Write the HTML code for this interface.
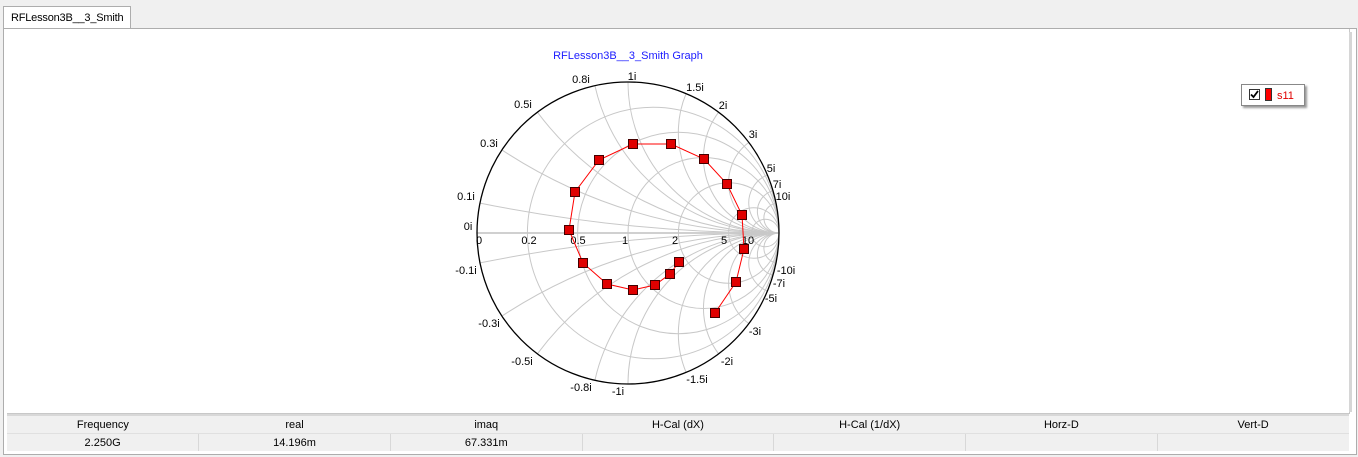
<!DOCTYPE html>
<html><head><meta charset="utf-8"><style>
html,body{margin:0;padding:0;width:1358px;height:457px;overflow:hidden;background:#f0f0f0;font-family:"Liberation Sans",sans-serif;}
.tab{position:absolute;left:3px;top:6px;width:128px;height:22px;background:#fff;border:1px solid #adadad;border-bottom:none;font-size:11px;line-height:22px;padding-left:7px;box-sizing:border-box;white-space:nowrap;letter-spacing:-0.2px;}
.panel{position:absolute;left:3px;top:28px;width:1354px;height:427px;border:1px solid #adadad;background:#fff;box-sizing:border-box;}
.chart{position:absolute;left:7px;top:29px;width:1342px;height:384px;background:#fff;border-right:1px solid #c8c8c8;border-bottom:1px solid #c8c8c8;}
.sb{position:absolute;left:1349px;top:32px;width:3px;height:380px;background:#d6d6d6;}
table{position:absolute;left:7px;top:414px;width:1342px;border-collapse:collapse;font-size:11px;table-layout:fixed;}
td{text-align:center;height:17px;padding:0;background:#f0f0f0;}
tr.h td{border-top:2px solid #d8d8d8;border-bottom:1px solid #e0e0e0;}
tr.d td{border-right:1px solid #d8d8d8;}
.leg{position:absolute;left:1241px;top:84px;width:62px;height:20px;background:#fff;border:1px solid #888;box-shadow:2px 2px 2px #999;}
</style></head><body>
<div class="panel"></div>
<div class="tab">RFLesson3B__3_Smith</div>
<div class="chart"></div>
<div class="sb"></div>
<svg width="1358" height="457" style="position:absolute;left:0;top:0" font-family="Liberation Sans, sans-serif" font-size="11">
<text x="628" y="59" fill="#1c1cff" text-anchor="middle">RFLesson3B__3_Smith Graph</text>
<g transform="translate(1,-1)" fill="none" stroke="#c8c8c8" stroke-width="1">
<line x1="476" y1="234" x2="778" y2="234" stroke="#d0d0d0" stroke-width="2"/>
<circle cx="652.2" cy="234" r="125.8"/>
<circle cx="677.3" cy="234" r="100.7"/>
<circle cx="702.5" cy="234" r="75.5"/>
<circle cx="727.7" cy="234" r="50.3"/>
<circle cx="752.8" cy="234" r="25.2"/>
<circle cx="764.3" cy="234" r="13.7"/>
<path d="M778 234A1510 1510 0 0 1 479 204.1M778 234A1510 1510 0 0 0 479 263.9"/>
<path d="M778 234A503.3 503.3 0 0 1 500.9 150.9M778 234A503.3 503.3 0 0 0 500.9 317.1"/>
<path d="M778 234A302 302 0 0 1 536.4 113.2M778 234A302 302 0 0 0 536.4 354.8"/>
<path d="M778 234A188.75 188.75 0 0 1 593.9 86.7M778 234A188.75 188.75 0 0 0 593.9 381.3"/>
<path d="M778 234A151 151 0 0 1 627 83M778 234A151 151 0 0 0 627 385"/>
<path d="M778 234A100.67 100.67 0 0 1 685.1 94.6M778 234A100.67 100.67 0 0 0 685.1 373.4"/>
<path d="M778 234A75.5 75.5 0 0 1 717.6 113.2M778 234A75.5 75.5 0 0 0 717.6 354.8"/>
<path d="M778 234A50.33 50.33 0 0 1 747.8 143.4M778 234A50.33 50.33 0 0 0 747.8 324.6"/>
<path d="M778 234A30.2 30.2 0 0 1 766.4 175.9M778 234A30.2 30.2 0 0 0 766.4 292.1"/>
<path d="M778 234A21.57 21.57 0 0 1 772 191.7M778 234A21.57 21.57 0 0 0 772 276.3"/>
<path d="M778 234A15.1 15.1 0 0 1 775 204.1M778 234A15.1 15.1 0 0 0 775 263.9"/>
<circle cx="627" cy="234" r="151" stroke="#000" stroke-width="1.3"/>
</g>
<g fill="#000" text-anchor="middle">
<text x="479" y="244">0</text><text x="529" y="244">0.2</text><text x="578" y="244">0.5</text>
<text x="625" y="244">1</text><text x="675" y="244">2</text><text x="724" y="244">5</text><text x="748" y="244">10</text>
<text x="632" y="80">1i</text><text x="581" y="83">0.8i</text><text x="523" y="108">0.5i</text><text x="489" y="147">0.3i</text>
<text x="466" y="200">0.1i</text><text x="468" y="230">0i</text><text x="695" y="91">1.5i</text><text x="723" y="109">2i</text>
<text x="753" y="138">3i</text><text x="771" y="172">5i</text><text x="777" y="188">7i</text><text x="783" y="200">10i</text>
<text x="466" y="274">-0.1i</text><text x="489" y="327">-0.3i</text><text x="522" y="365">-0.5i</text><text x="581" y="391">-0.8i</text>
<text x="618" y="395">-1i</text><text x="697" y="383">-1.5i</text><text x="727" y="365">-2i</text><text x="755" y="335">-3i</text>
<text x="771" y="302">-5i</text><text x="779" y="287">-7i</text><text x="786" y="274">-10i</text>
</g>
<polyline fill="none" stroke="#f00" stroke-width="1" points="679,262 670,274 655,285 633,290 607,284 583,263 569,230 575,192 599,160 633,144 671,144 704,159 727,184 742,215 744,249 736,282 715,313"/>
<g fill="#e00000" stroke="#400" stroke-width="1">
<rect x="674.5" y="257.5" width="9" height="9"/><rect x="665.5" y="269.5" width="9" height="9"/><rect x="650.5" y="280.5" width="9" height="9"/>
<rect x="628.5" y="285.5" width="9" height="9"/><rect x="602.5" y="279.5" width="9" height="9"/><rect x="578.5" y="258.5" width="9" height="9"/>
<rect x="564.5" y="225.5" width="9" height="9"/><rect x="570.5" y="187.5" width="9" height="9"/><rect x="594.5" y="155.5" width="9" height="9"/>
<rect x="628.5" y="139.5" width="9" height="9"/><rect x="666.5" y="139.5" width="9" height="9"/><rect x="699.5" y="154.5" width="9" height="9"/>
<rect x="722.5" y="179.5" width="9" height="9"/><rect x="737.5" y="210.5" width="9" height="9"/><rect x="739.5" y="244.5" width="9" height="9"/>
<rect x="731.5" y="277.5" width="9" height="9"/><rect x="710.5" y="308.5" width="9" height="9"/>
</g>
</svg>
<div class="leg">
<svg width="62" height="20" style="position:absolute;left:0;top:0" font-family="Liberation Sans, sans-serif">
<rect x="7.5" y="4.5" width="10" height="10" fill="#fff" stroke="#333"/>
<path d="M9 9.5L11.5 12L16 6" stroke="#000" stroke-width="1.8" fill="none"/>
<rect x="23.5" y="3.5" width="6" height="12" fill="#f00" stroke="#333"/>
<text x="35" y="14" fill="#e00000" font-size="11">s11</text>
</svg>
</div>
<table>
<tr class="h"><td>Frequency</td><td>real</td><td>imaq</td><td>H-Cal (dX)</td><td>H-Cal (1/dX)</td><td>Horz-D</td><td>Vert-D</td></tr>
<tr class="d"><td>2.250G</td><td>14.196m</td><td>67.331m</td><td></td><td></td><td></td><td style="border-right:none"></td></tr>
</table>
</body></html>
